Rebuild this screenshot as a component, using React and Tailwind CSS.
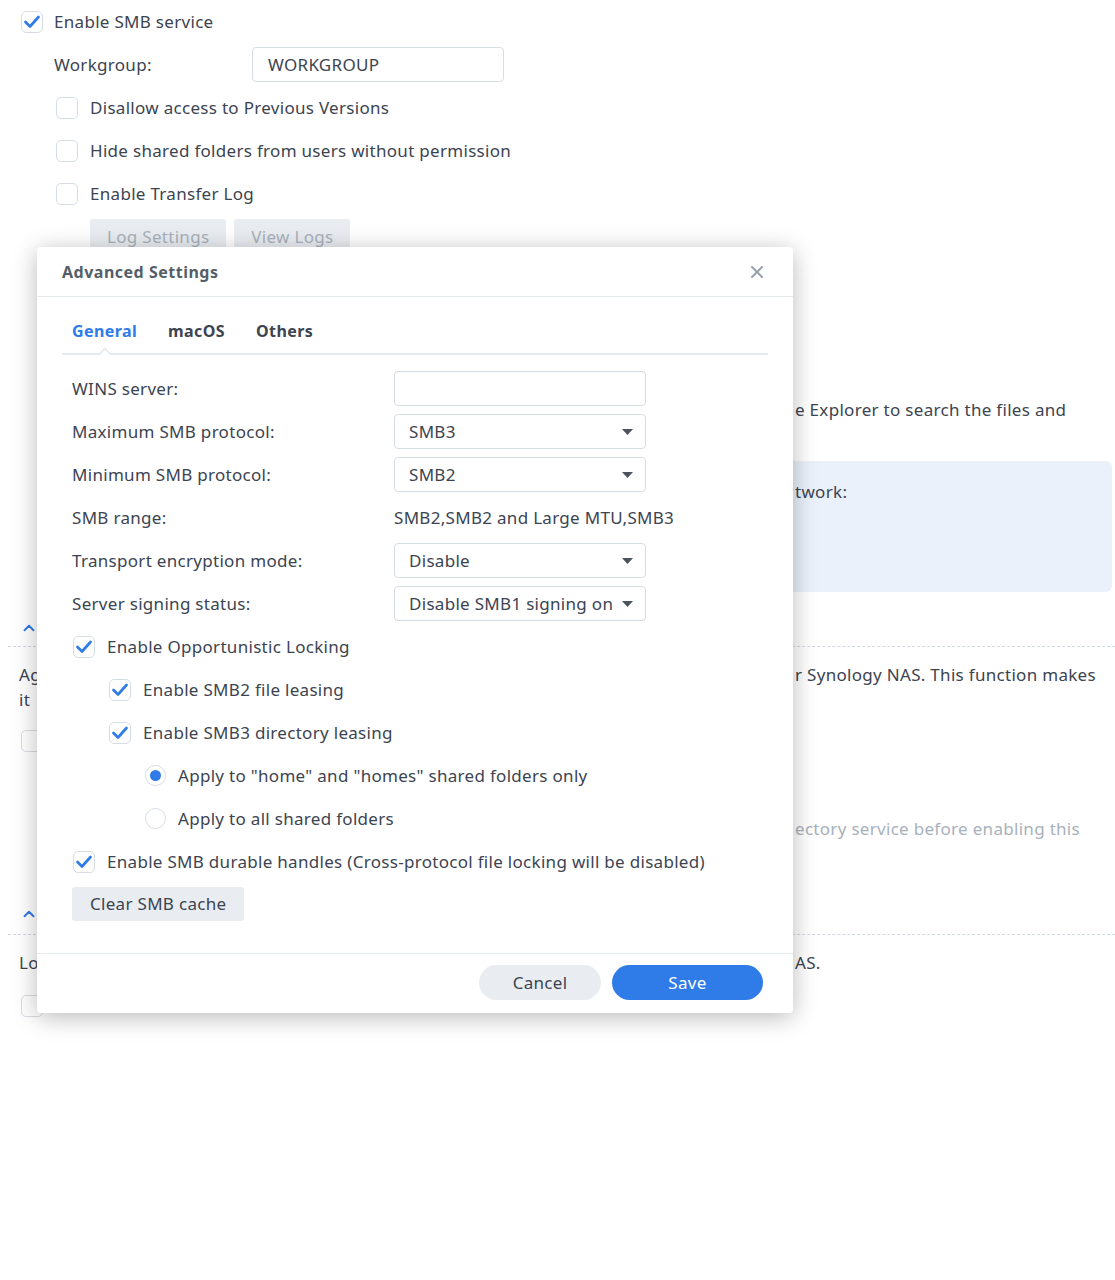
import { X, ChevronUp } from 'lucide-react'

const font = { fontFamily: '"Noto Sans", "Open Sans", sans-serif' }

function Check({ checked }) {
  return (
    <span className="w-[22px] h-[22px] shrink-0 rounded-[5px] border border-[#d7dde4] bg-white flex items-center justify-center">
      {checked && (
        <svg width="20" height="20" viewBox="0 0 20 20" fill="none">
          <path d="M3.5 10 L8 14.5 L16.5 5" stroke="#2f7be8" strokeWidth="2.7" strokeLinecap="round" strokeLinejoin="round" />
        </svg>
      )}
    </span>
  )
}

function Radio({ checked }) {
  return (
    <span className="w-[21px] h-[21px] shrink-0 rounded-full border border-[#d7dde4] bg-white flex items-center justify-center">
      {checked && <span className="w-[11px] h-[11px] rounded-full bg-[#2f7be8]" />}
    </span>
  )
}

function Caret() {
  return (
    <svg width="11" height="6" viewBox="0 0 11 6" className="shrink-0">
      <path d="M0 0 L11 0 L5.5 6 Z" fill="#4b535e" />
    </svg>
  )
}

function Select({ value }) {
  return (
    <div className="w-[252px] h-[35px] rounded-[4px] border border-[#d7dde4] bg-white flex items-center justify-between pl-[14px] pr-[12px]">
      <span className="whitespace-nowrap">{value}</span>
      <Caret />
    </div>
  )
}

function FieldRow({ label, children }) {
  return (
    <div className="h-[43px] flex items-center">
      <span className="w-[322px] shrink-0">{label}</span>
      {children}
    </div>
  )
}

function CheckRow({ checked, label, indent = '' }) {
  return (
    <div className={`h-[43px] flex items-center gap-[12px] ${indent}`}>
      <Check checked={checked} />
      <span className="whitespace-nowrap">{label}</span>
    </div>
  )
}

function RadioRow({ checked, label }) {
  return (
    <div className="h-[43px] flex items-center gap-[12px] pl-[73px]">
      <Radio checked={checked} />
      <span className="whitespace-nowrap">{label}</span>
    </div>
  )
}

function Dashed() {
  return <div className="ml-[8px] border-t border-dashed border-[#d3d9e0]" />
}

function Background() {
  return (
    <div className="relative text-[#3c4451]">
      <div className="flex flex-col">
        <div className="h-[43px] flex items-center gap-[11px] pl-[21px]">
          <Check checked />
          <span>Enable SMB service</span>
        </div>
        <div className="h-[43px] flex items-center pl-[54px]">
          <span className="w-[198px]">Workgroup:</span>
          <div className="w-[252px] h-[35px] rounded-[4px] border border-[#d7dde4] flex items-center pl-[15px]">WORKGROUP</div>
        </div>
        <CheckRow label="Disallow access to Previous Versions" indent="pl-[56px]" />
        <CheckRow label="Hide shared folders from users without permission" indent="pl-[56px]" />
        <CheckRow label="Enable Transfer Log" indent="pl-[56px]" />
        <div className="h-[50px] flex items-start gap-[8px] pl-[90px] pt-[4px]">
          <div className="h-[36px] px-[17px] rounded-[3px] bg-[#e9edf1] text-[#a8b1bb] flex items-center">Log Settings</div>
          <div className="h-[36px] px-[17px] rounded-[3px] bg-[#e9edf1] text-[#a8b1bb] flex items-center">View Logs</div>
        </div>
        <div className="h-[162px] flex items-end">
          <div className="h-[34px] flex items-center pl-[795px]">
            <span className="whitespace-nowrap">e Explorer to search the files and</span>
          </div>
        </div>
        <div className="mt-[34px] mr-[3px] ml-[54px] h-[131px] rounded-[6px] bg-[#eaf1fb] pt-[18px] pl-[741px]">
          <span>twork:</span>
        </div>
        <div className="mt-[26px] h-[20px] pl-[20px] flex items-center text-[#2f7be8]">
          <ChevronUp size={18} strokeWidth={2.5} />
        </div>
        <div className="mt-[8px]"><Dashed /></div>
        <div className="pt-[15px] pl-[19px] leading-[25px]">
          <div className="flex">
            <span className="w-[776px]">Ag</span>
            <span className="whitespace-nowrap">r Synology NAS. This function makes</span>
          </div>
          <div>it</div>
        </div>
        <div className="pl-[21px] pt-[18px]">
          <Check />
        </div>
        <div className="pt-[64px] pl-[795px] flex text-[#a8b1bb]">
          <span className="whitespace-nowrap">ectory service before enabling this</span>
        </div>
        <div className="mt-[62px] h-[20px] pl-[20px] flex items-center text-[#2f7be8]">
          <ChevronUp size={18} strokeWidth={2.5} />
        </div>
        <div className="mt-[10px]"><Dashed /></div>
        <div className="pt-[15px] pl-[19px] flex">
          <span className="w-[776px]">Lo</span>
          <span>AS.</span>
        </div>
        <div className="pl-[21px] pt-[20px]">
          <Check />
        </div>
      </div>
    </div>
  )
}

function Dialog() {
  return (
    <div className="absolute left-[37px] top-[247px] w-[756px] h-[766px] bg-white rounded-[4px] shadow-[0_4px_24px_rgba(0,0,0,0.28)] flex flex-col text-[#3c4451]">
      <div className="h-[50px] shrink-0 border-b border-[#e5eaef] flex items-center justify-between pl-[25px] pr-[26px]">
        <span className="font-bold text-[16px] tracking-[0.5px] text-[#555e68]">Advanced Settings</span>
        <X size={20} strokeWidth={2.6} className="text-[#9aa2ac]" />
      </div>
      <div className="flex-1 flex flex-col">
        <div className="mx-[25px] mt-[22px] relative border-b-2 border-[#e5eaef] h-[36px] flex items-start pl-[10px] gap-[31px] font-bold text-[16px] tracking-[0.4px]">
          <span className="text-[#2f7be8]">General</span>
          <span className="text-[#3d4550]">macOS</span>
          <span className="text-[#3d4550]">Others</span>
          <span className="absolute left-[37px] bottom-[-2px] w-[12px] h-[8px]">
            <svg width="12" height="8" viewBox="0 0 12 8">
              <path d="M0 8 L6 1.5 L12 8" fill="white" stroke="#dfe5eb" strokeWidth="1.2" />
            </svg>
          </span>
        </div>
        <div className="pl-[35px] pt-[12px] flex flex-col">
          <FieldRow label="WINS server:">
            <div className="w-[252px] h-[35px] rounded-[4px] border border-[#d7dde4] bg-white" />
          </FieldRow>
          <FieldRow label="Maximum SMB protocol:"><Select value="SMB3" /></FieldRow>
          <FieldRow label="Minimum SMB protocol:"><Select value="SMB2" /></FieldRow>
          <FieldRow label="SMB range:"><span className="whitespace-nowrap">SMB2,SMB2 and Large MTU,SMB3</span></FieldRow>
          <FieldRow label="Transport encryption mode:"><Select value="Disable" /></FieldRow>
          <FieldRow label="Server signing status:"><Select value="Disable SMB1 signing on" /></FieldRow>
          <CheckRow checked label="Enable Opportunistic Locking" indent="pl-[1px]" />
          <CheckRow checked label="Enable SMB2 file leasing" indent="pl-[37px]" />
          <CheckRow checked label="Enable SMB3 directory leasing" indent="pl-[37px]" />
          <RadioRow checked label='Apply to "home" and "homes" shared folders only' />
          <RadioRow label="Apply to all shared folders" />
          <CheckRow checked label="Enable SMB durable handles (Cross-protocol file locking will be disabled)" indent="pl-[1px]" />
          <div className="pt-[4px]">
            <button className="h-[34px] px-[18px] rounded-[3px] bg-[#e9edf1] text-[#3c4451] tracking-[0.3px]">Clear SMB cache</button>
          </div>
        </div>
      </div>
      <div className="h-[60px] shrink-0 border-t border-[#e5eaef] flex items-start justify-end gap-[11px] pr-[30px] pt-[11px]">
        <button className="w-[122px] h-[35px] rounded-full bg-[#e9edf1] text-[#3c4451] tracking-[0.3px]">Cancel</button>
        <button className="w-[151px] h-[35px] rounded-full bg-[#2f7be8] text-white tracking-[0.3px]">Save</button>
      </div>
    </div>
  )
}

export default function App() {
  return (
    <div className="relative w-[1115px] h-[1280px] bg-white overflow-hidden text-[17px] tracking-[0.3px]" style={font}>
      <Background />
      <Dialog />
    </div>
  )
}
